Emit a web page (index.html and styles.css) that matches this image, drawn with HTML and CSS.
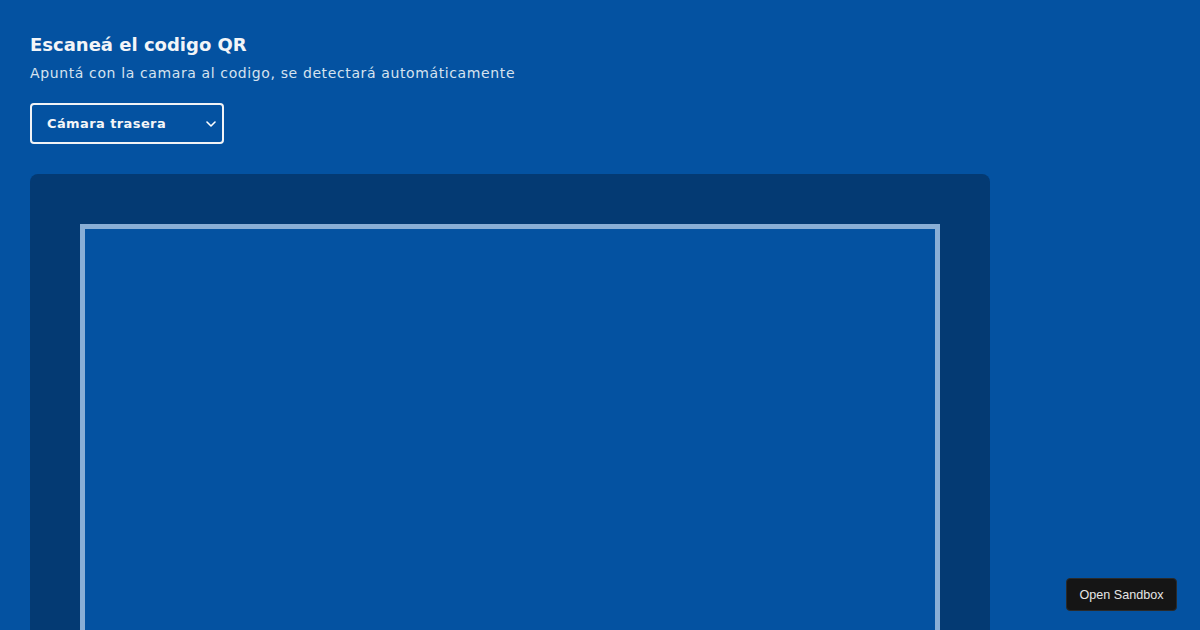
FILE: index.html
```html
<!DOCTYPE html>
<html lang="es">
<head>
<meta charset="utf-8">
<title>Escanear QR</title>
<link rel="stylesheet" href="styles.css">
</head>
<body>
<main class="page">
  <header class="head">
    <h1 class="title">Escaneá el codigo QR</h1>
    <p class="subtitle">Apuntá con la camara al codigo, se detectará automáticamente</p>
  </header>
  <div class="select">
    <span class="select-label">Cámara trasera</span>
    <svg class="chev" width="10" height="6" viewBox="0 0 10 6"><path d="M1 1l4 4 4-4" fill="none" stroke="#fff" stroke-width="1.6" stroke-linecap="round" stroke-linejoin="round"/></svg>
  </div>
  <section class="card">
    <div class="frame"></div>
  </section>
</main>
<button class="sandbox">Open Sandbox</button>
</body>
</html>
```
FILE: styles.css
```css
html, body {
  margin: 0;
  padding: 0;
  background: #0452a1;
}
.page {
  box-sizing: border-box;
  height: 630px;
  overflow: hidden;
  padding: 33px 30px 0 30px;
  width: 1020px;
  font-family: "DejaVu Sans", sans-serif;
}
.head { margin-bottom: 20px; }
.title {
  margin: 0;
  color: #f3f5f8;
  font-size: 18px;
  font-weight: 700;
  line-height: 24px;
}
.subtitle {
  margin: 6px 0 0;
  color: #d6e2ef;
  font-size: 14px;
  letter-spacing: 0.62px;
  line-height: 20px;
}
.select {
  box-sizing: border-box;
  width: 194px;
  height: 41px;
  border: 2.5px solid #f1f3f6;
  border-radius: 4px;
  display: flex;
  align-items: center;
  justify-content: space-between;
  padding: 0 6px 0 15px;
  margin-bottom: 30px;
}
.select-label {
  color: #f3f5f8;
  font-size: 13px;
  font-weight: 700;
  letter-spacing: 0.4px;
}
.card {
  background: #043a73;
  border-radius: 8px;
  padding: 50px;
  height: 600px;
}
.frame {
  box-sizing: border-box;
  border: 5px solid #89aed6;
  background: #0452a1;
  height: 100%;
}
.sandbox {
  position: fixed;
  right: 23px;
  bottom: 19px;
  width: 111px;
  height: 33px;
  background: #151515;
  color: #e6e6e6;
  border: 1px solid #2a2a2a;
  border-radius: 4px;
  font-family: "Liberation Sans", Arial, sans-serif;
  font-size: 12.6px;
  padding: 0;
}
```
